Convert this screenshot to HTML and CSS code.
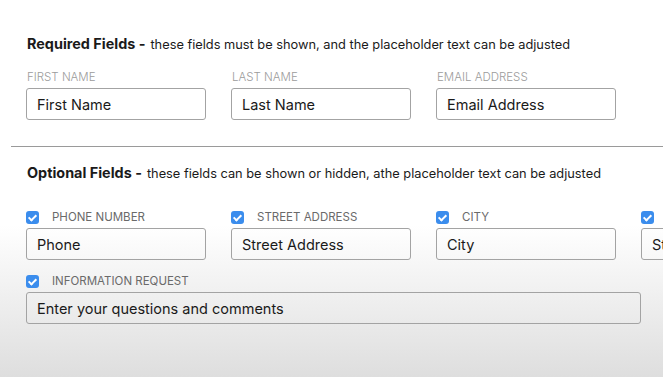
FILE: index.html
```html
<!DOCTYPE html>
<html lang="en">
<head>
    <meta charset="UTF-8">
    <meta name="viewport" content="width=device-width, initial-scale=1.0">
    <title>Form Fields</title>
    <link rel="stylesheet" href="styles.css">
</head>
<body>
    <section class="group required">
        <h3 class="group-title"><strong>Required Fields -</strong> these fields must be shown, and the placeholder text can be adjusted</h3>

        <div class="field-row">
            <div class="field">
                <label class="field-label">First Name</label>
                <input type="text" class="field-input" value="First Name">
            </div>
            <div class="field">
                <label class="field-label">Last Name</label>
                <input type="text" class="field-input" value="Last Name">
            </div>
            <div class="field">
                <label class="field-label">Email Address</label>
                <input type="text" class="field-input" value="Email Address">
            </div>
        </div>
    </section>

    <hr class="divider">

    <section class="group optional">
        <h3 class="group-title"><strong>Optional Fields -</strong> these fields can be shown or hidden, athe placeholder text can be adjusted</h3>

        <div class="field-row">
            <div class="field">
                <label class="field-label toggle"><input type="checkbox" checked> Phone Number</label>
                <input type="text" class="field-input" value="Phone">
            </div>
            <div class="field">
                <label class="field-label toggle"><input type="checkbox" checked> Street Address</label>
                <input type="text" class="field-input" value="Street Address">
            </div>
            <div class="field">
                <label class="field-label toggle"><input type="checkbox" checked> City</label>
                <input type="text" class="field-input" value="City">
            </div>
            <div class="field">
                <label class="field-label toggle"><input type="checkbox" checked> State</label>
                <input type="text" class="field-input" value="State">
            </div>
        </div>

        <div class="field field-wide">
            <label class="field-label toggle"><input type="checkbox" checked> Information Request</label>
            <input type="text" class="field-input" value="Enter your questions and comments">
        </div>
    </section>
</body>
</html>
```

FILE: styles.css
```css
:root {
    --text: #1a1a1a;
    --label-light: #9b9b9b;
    --label-dark: #6a6a6a;
    --border: #a3a3a3;
    --check-blue: #3b8ded;
}

* {
    margin: 0;
    padding: 0;
    box-sizing: border-box;
    font-family: 'Inter', sans-serif;
}

html, body {
    height: 100%;
}

body {
    width: 663px;
    overflow: hidden;
    color: var(--text);
    background: linear-gradient(to bottom, #fff 0, #fff 225px, #dedede 377px);
}

.group {
    padding: 0 0 0 26px;
}

.required {
    padding-top: 35px;
}

.group-title {
    display: flex;
    align-items: baseline;
    gap: 5px;
    height: 18px;
    font-size: 12.8px;
    font-weight: 400;
    line-height: 18px;
    white-space: nowrap;
    padding-left: 1px;
}

.group-title strong {
    font-size: 14.4px;
    font-weight: 700;
}

.field-row {
    display: flex;
    gap: 25px;
    margin-top: 17px;
}

.field {
    flex: 0 0 180px;
    display: flex;
    flex-direction: column;
    gap: 4px;
}

.field-label {
    font-size: 11.5px;
    font-weight: 300;
    line-height: 14px;
    text-transform: uppercase;
    color: var(--label-light);
    padding-left: 1px;
    white-space: nowrap;
}

.field-input {
    width: 180px;
    height: 32px;
    border: 1px solid var(--border);
    border-radius: 3px;
    background: transparent;
    padding: 0 10px;
    font-size: 14.5px;
    color: var(--text);
    outline: none;
}

.divider {
    border: none;
    border-top: 1px solid #9a9a9a;
    margin: 26px 0 0 11px;
}

.optional {
    padding-top: 17px;
}

.optional .field-row {
    margin-top: 28px;
}

.optional .field {
    gap: 4px;
}

.toggle {
    display: flex;
    align-items: center;
    gap: 13px;
    font-weight: 400;
    color: var(--label-dark);
    padding-left: 0;
}

.toggle input {
    appearance: none;
    width: 13px;
    height: 13px;
    border-radius: 3px;
    background: var(--check-blue);
    position: relative;
    flex: 0 0 13px;
}

.toggle input::after {
    content: '';
    position: absolute;
    left: 4px;
    top: 2px;
    width: 3px;
    height: 6px;
    border: solid #fff;
    border-width: 0 2px 2px 0;
    transform: rotate(45deg);
}

.field-wide {
    margin-top: 14px;
    width: 615px;
    gap: 2px;
}

.field-wide .field-input {
    width: 615px;
}
```
